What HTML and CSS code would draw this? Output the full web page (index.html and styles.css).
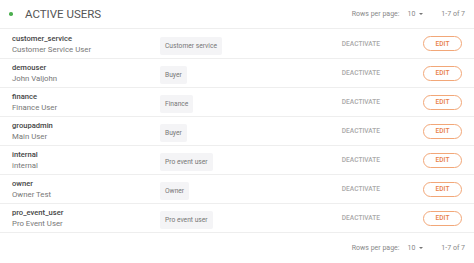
FILE: index.html
```html
<!DOCTYPE html>
<html lang="en">
<head>
  <meta charset="UTF-8" />
  <title>Active Users</title>
  <link rel="stylesheet" href="styles.css">
</head>
<body>

  <div class="toolbar">
    <div class="title">
      <span class="dot"></span>
      <h1>ACTIVE USERS</h1>
    </div>
    <div class="pager">
      <span>Rows per page:</span>
      <span class="select">10 <span class="caret"></span></span>
      <span class="range">1-7 of 7</span>
    </div>
  </div>

  <div class="users">
    <div class="row">
      <div class="name"><b>customer_service</b><span>Customer Service User</span></div>
      <div class="role"><span class="chip">Customer service</span></div>
      <button class="deactivate">DEACTIVATE</button>
      <button class="edit">EDIT</button>
    </div>
    <div class="row">
      <div class="name"><b>demouser</b><span>John Valjohn</span></div>
      <div class="role"><span class="chip">Buyer</span></div>
      <button class="deactivate">DEACTIVATE</button>
      <button class="edit">EDIT</button>
    </div>
    <div class="row">
      <div class="name"><b>finance</b><span>Finance User</span></div>
      <div class="role"><span class="chip">Finance</span></div>
      <button class="deactivate">DEACTIVATE</button>
      <button class="edit">EDIT</button>
    </div>
    <div class="row">
      <div class="name"><b>groupadmin</b><span>Main User</span></div>
      <div class="role"><span class="chip">Buyer</span></div>
      <button class="deactivate">DEACTIVATE</button>
      <button class="edit">EDIT</button>
    </div>
    <div class="row">
      <div class="name"><b>internal</b><span>internal</span></div>
      <div class="role"><span class="chip">Pro event user</span></div>
      <button class="deactivate">DEACTIVATE</button>
      <button class="edit">EDIT</button>
    </div>
    <div class="row">
      <div class="name"><b>owner</b><span>Owner Test</span></div>
      <div class="role"><span class="chip">Owner</span></div>
      <button class="deactivate">DEACTIVATE</button>
      <button class="edit">EDIT</button>
    </div>
    <div class="row">
      <div class="name"><b>pro_event_user</b><span>Pro Event User</span></div>
      <div class="role"><span class="chip">Pro event user</span></div>
      <button class="deactivate">DEACTIVATE</button>
      <button class="edit">EDIT</button>
    </div>
  </div>

  <div class="footer">
    <div class="pager">
      <span>Rows per page:</span>
      <span class="select">10 <span class="caret"></span></span>
      <span class="range">1-7 of 7</span>
    </div>
  </div>

</body>
</html>
```

FILE: styles.css
```css
body {
  margin: 0;
  font-family: Roboto, "Liberation Sans", sans-serif;
  background-color: #fff;
  color: #333;
}

.toolbar {
  display: flex;
  justify-content: space-between;
  align-items: center;
  height: 28px;
  padding: 0 9px 0 9px;
  border-bottom: 1px solid #eee;
}

.title {
  display: flex;
  align-items: center;
}

.dot {
  width: 3.5px;
  height: 3.5px;
  border-radius: 50%;
  background-color: #4caf50;
  margin-right: 12.5px;
}

.title h1 {
  margin: 0;
  font-size: 11.5px;
  font-weight: 400;
  color: #555;
}

.pager {
  display: flex;
  align-items: center;
  font-size: 7px;
  color: #888;
}

.select {
  margin-left: 8px;
  display: flex;
  align-items: center;
}

.caret {
  display: inline-block;
  margin-left: 4px;
  border-left: 2.5px solid transparent;
  border-right: 2.5px solid transparent;
  border-top: 2.5px solid #777;
}

.range {
  margin-left: 18px;
}

.row {
  display: flex;
  align-items: center;
  height: 28px;
  padding: 0 12px;
  border-bottom: 1px solid #eee;
}

.row:first-child {
  height: 29px;
}

.name {
  width: 148px;
  display: flex;
  flex-direction: column;
}

.name b {
  font-size: 7.6px;
  font-weight: 500;
  color: #444;
}

.name span {
  font-size: 7.8px;
  color: #777;
  margin-top: 2px;
}

.role {
  flex: 1;
}

.chip {
  display: inline-block;
  background-color: #f4f4f6;
  padding: 5px 5px;
  font-size: 6.7px;
  color: #777;
  border-radius: 2px;
}

button {
  font-family: inherit;
  cursor: pointer;
}

.deactivate {
  background: none;
  border: none;
  padding: 0;
  font-size: 6.6px;
  font-weight: 500;
  color: #aaa;
  margin-right: 43px;
}

.edit {
  width: 39px;
  height: 15px;
  background: #fff;
  border: 1px solid #f2a778;
  border-radius: 8px;
  color: #e8804a;
  font-size: 6.6px;
  font-weight: 500;
  padding: 0;
}

.footer {
  display: flex;
  justify-content: flex-end;
  padding: 11px 9px 0;
}
```
